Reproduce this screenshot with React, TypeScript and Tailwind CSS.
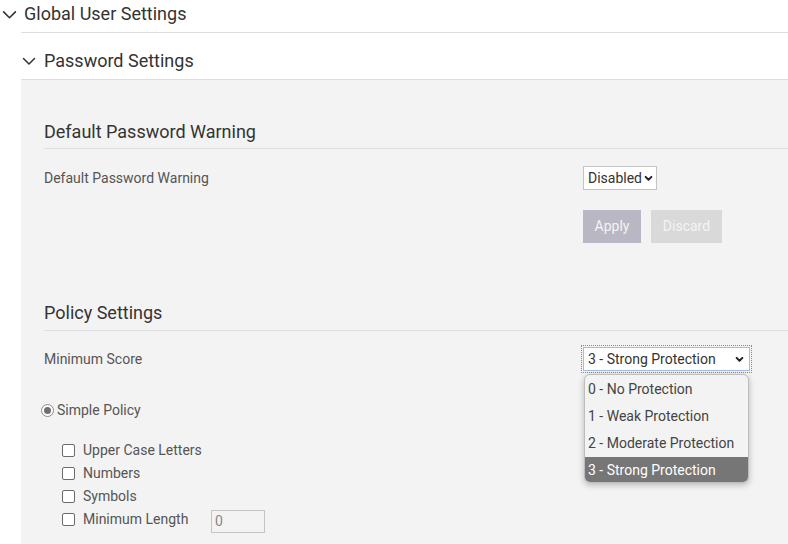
import React from "react";

const Chevron = ({ className = "" }: { className?: string }) => (
  <svg viewBox="0 0 14 14" className={className} fill="none" stroke="#333" strokeWidth="1.5" strokeLinecap="round" strokeLinejoin="round">
    <path d="M1.5 4.5 L7 10 L12.5 4.5" />
  </svg>
);

const SmallChevron = () => (
  <svg viewBox="0 0 10 10" className="w-[9px] h-[9px]" fill="none" stroke="#222" strokeWidth="2.2" strokeLinecap="round" strokeLinejoin="round">
    <path d="M1.8 3.2 L5 6.4 L8.2 3.2" />
  </svg>
);

const Checkbox = ({ label }: { label: string }) => (
  <div className="flex items-center h-[23px]">
    <div className="w-[13px] h-[13px] border border-[#6b6b6b] rounded-[2px] bg-white ml-[18px]" />
    <span className="ml-[8px] text-[14px] text-[#555]">{label}</span>
  </div>
);

export default function App() {
  const options = ["0 - No Protection", "1 - Weak Protection", "2 - Moderate Protection", "3 - Strong Protection"];
  return (
    <div className="w-[788px] h-[544px] overflow-hidden bg-white relative" style={{ fontFamily: "Roboto, 'Noto Sans', sans-serif" }}>
      <div className="h-[32px] pt-[2px] flex items-start">
        <div className="w-[24px] h-[24px] flex items-center pl-[2px]">
          <Chevron className="w-[15px] h-[15px]" />
        </div>
        <span className="text-[18px] leading-6 text-[#333]">Global User Settings</span>
      </div>
      <div className="ml-[21px] border-t border-[#ddd]">
        <div className="h-[47px] pt-[16px] flex items-start border-b border-[#ddd]">
          <div className="w-[23px] h-[24px] flex items-center pl-[1px]">
            <Chevron className="w-[14px] h-[14px]" />
          </div>
          <span className="text-[18px] leading-6 text-[#333]">Password Settings</span>
        </div>
        <div className="bg-[#f3f3f3] pl-[23px] h-[600px]">
          <div className="pt-[40px] pb-[4px] border-b border-[#ddd] text-[18px] leading-6 text-[#333]">Default Password Warning</div>
          <div className="flex items-center mt-[17px]">
            <div className="w-[539px] text-[14px] text-[#555]">Default Password Warning</div>
            <div className="h-[24px] w-[74px] border border-[#c4c4c4] bg-white flex items-center pl-[4px] pr-[3px] justify-between text-[14px] text-[#333]">
              <span>Disabled</span>
              <SmallChevron />
            </div>
          </div>
          <div className="flex mt-[20px] ml-[539px] gap-[10px]">
            <div className="w-[58px] h-[33px] bg-[#b9b7c3] text-[#f4f4f4] text-[14px] flex items-center justify-center">Apply</div>
            <div className="w-[71px] h-[33px] bg-[#d9d9d9] text-[#f4f4f4] text-[14px] flex items-center justify-center">Discard</div>
          </div>
          <div className="mt-[58px] pb-[5px] border-b border-[#ddd] text-[18px] leading-6 text-[#333]">Policy Settings</div>
          <div className="flex items-center mt-[16px] relative">
            <div className="w-[539px] text-[14px] text-[#555]">Minimum Score</div>
            <div className="outline-1 outline-dotted outline-[#7a8aa0] outline-offset-[1px]">
              <div className="h-[24px] w-[167px] border border-[#9fbde6] bg-white flex items-center pl-[4px] pr-[5px] justify-between text-[14px] text-[#333]">
                <span>3 - Strong Protection</span>
                <SmallChevron />
              </div>
            </div>
            <div className="absolute left-[540px] top-[27px] w-[165px] h-[109px] bg-[#f3f3f3] border border-[#bdbdbd] rounded-[6px] shadow-[0_2px_6px_rgba(0,0,0,0.25)] overflow-hidden pt-[1px] z-10">
              {options.map((o, i) => (
                <div key={o} className={`h-[27px] flex items-center pl-[3px] text-[14px] ${i === 3 ? "bg-[#767676] text-white" : "text-[#444]"}`}>{o}</div>
              ))}
            </div>
          </div>
          <div className="flex items-center mt-[29px] -ml-[3px] h-[20px]">
            <div className="w-[13px] h-[13px] rounded-full border border-[#8a8a8a] bg-white flex items-center justify-center">
              <div className="w-[7px] h-[7px] rounded-full bg-[#6f6f6f]" />
            </div>
            <span className="ml-[3px] text-[14px] text-[#555]">Simple Policy</span>
          </div>
          <div className="mt-[19px] flex flex-col">
            <Checkbox label="Upper Case Letters" />
            <Checkbox label="Numbers" />
            <Checkbox label="Symbols" />
            <div className="flex items-center h-[23px]">
              <div className="w-[13px] h-[13px] border border-[#6b6b6b] rounded-[2px] bg-white ml-[18px]" />
              <span className="ml-[8px] text-[14px] text-[#555] w-[128px]">Minimum Length</span>
              <div className="self-start w-[54px] h-[23px] border border-[#c4c4c4] bg-[#f3f3f3] text-[14px] text-[#888] flex items-center pl-[3px] mt-[2px] shrink-0">0</div>
            </div>
          </div>
        </div>
      </div>
    </div>
  );
}
